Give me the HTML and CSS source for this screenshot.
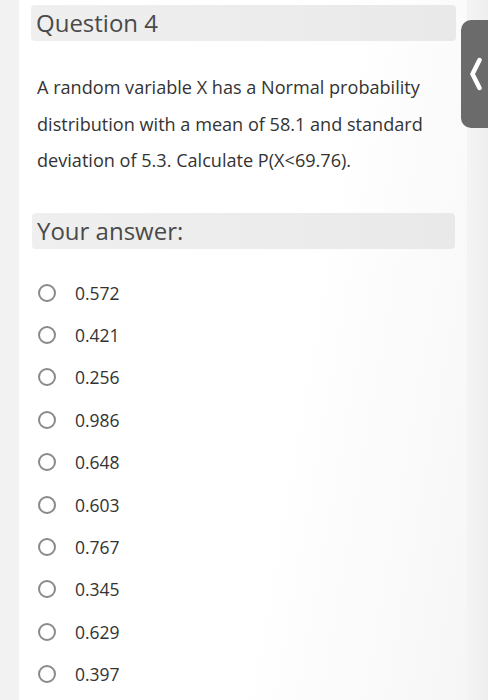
FILE: index.html
```html
<!DOCTYPE html>
<html>
<head>
<meta charset="utf-8">
<link rel="stylesheet" href="styles.css">
</head>
<body>
<div class="page">
  <div class="gutter-left"></div>
  <main class="panel">
    <div class="heading">Question 4</div>
    <p class="question">A random variable X has a Normal probability distribution with a mean of 58.1 and standard deviation of 5.3. Calculate P(X&lt;69.76).</p>
    <div class="heading answer-head">Your answer:</div>
    <ul class="options">
      <li><span class="radio"></span><span class="label">0.572</span></li>
      <li><span class="radio"></span><span class="label">0.421</span></li>
      <li><span class="radio"></span><span class="label">0.256</span></li>
      <li><span class="radio"></span><span class="label">0.986</span></li>
      <li><span class="radio"></span><span class="label">0.648</span></li>
      <li><span class="radio"></span><span class="label">0.603</span></li>
      <li><span class="radio"></span><span class="label">0.767</span></li>
      <li><span class="radio"></span><span class="label">0.345</span></li>
      <li><span class="radio"></span><span class="label">0.629</span></li>
      <li><span class="radio"></span><span class="label">0.397</span></li>
    </ul>
  </main>
  <div class="gutter-right"></div>
  <div class="tab">
    <svg width="14" height="34" viewBox="0 0 14 34"><path d="M10.5 3 L3.5 17 L10.5 31" fill="none" stroke="#fff" stroke-width="4.5" stroke-linecap="round" stroke-linejoin="round"/></svg>
  </div>
</div>
</body>
</html>
```
FILE: styles.css
```css
html, body { margin: 0; padding: 0; }
body {
  width: 488px;
  height: 700px;
  overflow: hidden;
  font-family: "Open Sans", "Liberation Sans", sans-serif;
  background: #fff;
}
.page {
  position: relative;
  display: flex;
  height: 700px;
}
.gutter-left {
  width: 19px;
  flex: none;
  background: #f2f2f2;
}
.gutter-right {
  width: 21px;
  flex: none;
  background: linear-gradient(90deg, #f4f4f4, #eeeeee);
}
.panel {
  flex: 1;
  background: linear-gradient(100deg, #ffffff 60%, #f6f6f6 100%);
  padding: 5px 11px 0 12px;
}
.heading {
  background: linear-gradient(90deg, #efefef, #e9e9e9);
  border-radius: 4px;
  height: 36px;
  font-size: 24px;
  line-height: 36px;
  color: #4a4a4a;
  padding-left: 5px;
}
.question {
  margin: 28px 0 0 0;
  padding-left: 6px;
  padding-right: 0;
  font-size: 18.1px;
  line-height: 36.5px;
  color: #333;
}
.answer-head {
  margin-top: 34px;
  margin-left: 1px;
  margin-right: 1px;
}
.options {
  list-style: none;
  margin: 23px 0 0 0;
  padding: 0;
}
.options li {
  display: flex;
  align-items: center;
  height: 42.4px;
}
.radio {
  width: 14px;
  height: 14px;
  border: 2px solid #8a8a8a;
  border-radius: 50%;
  margin-left: 7px;
  flex: none;
}
.label {
  margin-left: 19px;
  font-size: 17.5px;
  color: #333;
}
.tab {
  position: absolute;
  left: 461px;
  top: 20px;
  width: 27px;
  height: 108px;
  background: #6b6b6b;
  border-radius: 10px 0 0 10px;
  display: flex;
  align-items: center;
  justify-content: center;
  padding-left: 2px;
  box-sizing: border-box;
}
```
